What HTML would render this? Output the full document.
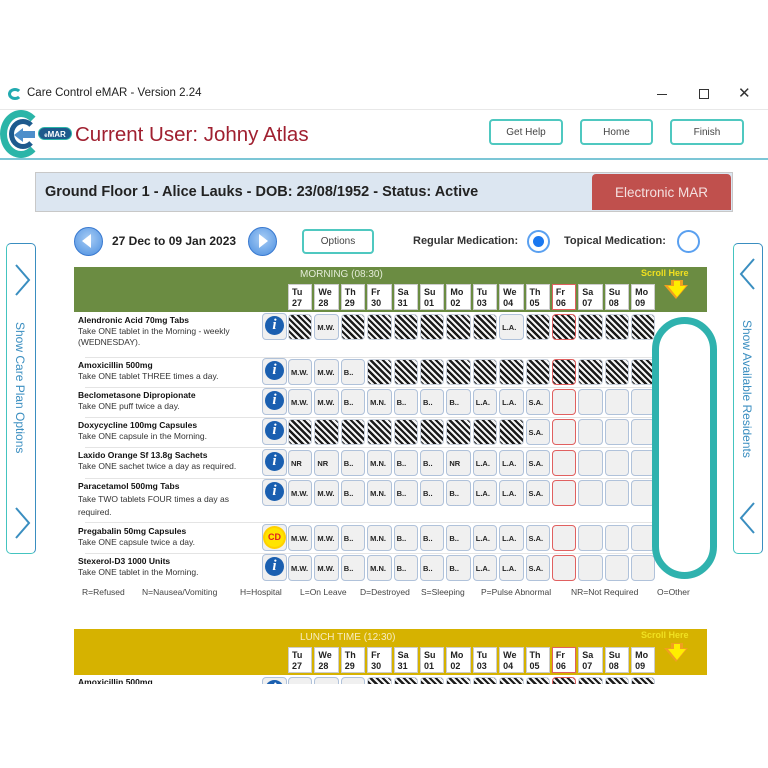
<!DOCTYPE html>
<html><head><meta charset="utf-8"><style>
*{box-sizing:border-box;margin:0;padding:0}
body{width:768px;height:768px;background:#fff;position:relative;overflow:hidden;font-family:"Liberation Sans",sans-serif;color:#222}
.a{position:absolute}
.btn{position:absolute;border:2px solid #4fc8c0;border-radius:4px;background:#fff;font-size:10px;color:#444;display:flex;align-items:center;justify-content:center}
.side{position:absolute;width:30px;border:1.5px solid #3a8ec0;border-radius:5px;border-color:#3a8ec0 #3a8ec0 #44c4c0 #44c4c0}
.vt{position:absolute;writing-mode:vertical-rl;font-size:12px;color:#3a8ec0;left:6px}
.grid{position:absolute;left:288px;display:grid;grid-template-columns:repeat(14,24.4px);column-gap:2px}
.c{height:26px;border:1.5px solid #b0c2da;border-radius:4px;background:#f0f0f0;font-size:7.5px;font-weight:bold;display:flex;align-items:center;padding-left:2px;white-space:nowrap;overflow:hidden}
.h{background:repeating-linear-gradient(45deg,#1a1a1a 0 2.2px,#f4f4f4 2.2px 4.4px);border-color:#c8d0dc}
.r{border-color:#e06060}
.dh{height:26px;background:#fff;font-size:9px;font-weight:bold;line-height:11px;padding:2px 0 0 3px;border:1px solid #ccc}
.dh.r{border-color:#e06060}
.med{position:absolute;left:78px;font-size:8.5px;color:#333;line-height:11px}
.med b{font-size:8.5px;color:#111}
.info{position:absolute;left:262px;width:25px;height:27px;border:1.5px solid #b0c2da;border-radius:4px;background:#f0f0f0}
.info:after{content:"i";position:absolute;left:2px;top:2px;width:19px;height:19px;border-radius:50%;background:#1a5fb0;color:#fff;font:italic bold 15px "Liberation Serif",serif;text-align:center;line-height:19px}
.sep{position:absolute;left:85px;width:570px;height:1px;background:#e4e4e4}
.lg{position:absolute;top:587px;font-size:8.5px;color:#444;white-space:nowrap}
svg.ch{position:absolute}
</style></head><body>
<!-- title bar -->
<div class="a" style="left:8px;top:88px;width:14px;height:12px;border:3px solid #22aab0;border-right-color:transparent;border-radius:50%"></div>
<div class="a" style="left:27px;top:87px;font-size:11.5px;color:#222">Care Control eMAR - Version 2.24</div>
<div class="a" style="left:657px;top:94px;width:10px;height:1px;background:#333"></div>
<div class="a" style="left:699px;top:89px;width:10px;height:10px;border:1px solid #333"></div>
<div class="a" style="left:738px;top:84px;font-size:15px;color:#333">✕</div>
<div class="a" style="left:0;top:109px;width:768px;height:1px;background:#e8e8e8"></div>
<!-- logo -->
<div class="a" style="left:0;top:110px;width:42px;height:48px;border:7px solid #2bb5a8;border-right-color:transparent;border-radius:50%"></div>
<div class="a" style="left:9px;top:119px;width:28px;height:30px;border:5px solid #1d5a8e;border-right-color:transparent;border-radius:50%"></div>
<div class="a" style="left:14px;top:128px;width:0;height:0;border:7px solid transparent;border-right:9px solid #4d8fcb;border-left:0"></div>
<div class="a" style="left:23px;top:131px;width:12px;height:7px;background:#4d8fcb"></div>
<div class="a" style="left:38px;top:127px;width:34px;height:13px;border-radius:7px;background:#1e5a8c;color:#fff;font-size:8px;font-weight:bold;line-height:13px;text-align:center;border:1.5px solid #2bb5a8"><span style="font-size:6px">e</span>MAR</div>
<div class="a" style="left:75px;top:123px;font-size:20.5px;color:#a02030">Current User: Johny Atlas</div>
<div class="btn" style="left:489px;top:119px;width:74px;height:26px">Get Help</div>
<div class="btn" style="left:580px;top:119px;width:73px;height:26px">Home</div>
<div class="btn" style="left:670px;top:119px;width:74px;height:26px">Finish</div>
<div class="a" style="left:0;top:158px;width:768px;height:2px;background:#7cc6d6"></div>
<!-- patient bar -->
<div class="a" style="left:35px;top:172px;width:698px;height:40px;background:#dce6f1;border:1px solid #c8c8c8"></div>
<div class="a" style="left:45px;top:184px;font-size:14.5px;font-weight:bold;color:#222">Ground Floor 1 - Alice Lauks - DOB: 23/08/1952 - Status: Active</div>
<div class="a" style="left:592px;top:174px;width:139px;height:36px;background:#c0504d;border-radius:4px 4px 0 0;color:#f4e0e0;font-size:13.5px;text-align:center;line-height:38px">Electronic MAR</div>
<!-- nav -->
<div class="a" style="left:74px;top:227px;width:29px;height:29px;border-radius:50%;background:radial-gradient(circle at 50% 40%,#a8cdf5,#4a8ee0);border:1px solid #3a7ad0"></div>
<div class="a" style="left:82px;top:234px;border:7px solid transparent;border-right:9px solid #fff;border-left:0"></div>
<div class="a" style="left:112px;top:234px;font-size:12px;font-weight:bold">27 Dec to 09 Jan 2023</div>
<div class="a" style="left:248px;top:227px;width:29px;height:29px;border-radius:50%;background:radial-gradient(circle at 50% 40%,#a8cdf5,#4a8ee0);border:1px solid #3a7ad0"></div>
<div class="a" style="left:259px;top:234px;border:7px solid transparent;border-left:9px solid #fff;border-right:0"></div>
<div class="btn" style="left:302px;top:229px;width:72px;height:25px">Options</div>
<div class="a" style="left:413px;top:235px;font-size:11px;font-weight:bold;color:#333">Regular Medication:</div>
<div class="a" style="left:527px;top:230px;width:23px;height:23px;border-radius:50%;border:2px solid #5aa0f0"></div>
<div class="a" style="left:533px;top:236px;width:11px;height:11px;border-radius:50%;background:#1a78f0"></div>
<div class="a" style="left:564px;top:235px;font-size:11px;font-weight:bold;color:#333">Topical Medication:</div>
<div class="a" style="left:677px;top:230px;width:23px;height:23px;border-radius:50%;border:2px solid #5aa0f0"></div>
<!-- side panels -->
<div class="side" style="left:6px;top:243px;height:311px"></div>
<svg class="ch" style="left:12px;top:262px" width="20" height="36"><path d="M4 3 L17 18 L4 33" fill="none" stroke="#3a8ec0" stroke-width="2"/></svg>
<svg class="ch" style="left:12px;top:505px" width="20" height="36"><path d="M4 3 L17 18 L4 33" fill="none" stroke="#3a8ec0" stroke-width="2"/></svg>
<div class="vt" style="left:13px;top:322px">Show Care Plan Options</div>
<div class="side" style="left:733px;top:243px;height:311px"></div>
<svg class="ch" style="left:738px;top:256px" width="20" height="36"><path d="M16 3 L3 18 L16 33" fill="none" stroke="#3a8ec0" stroke-width="2"/></svg>
<svg class="ch" style="left:738px;top:500px" width="20" height="36"><path d="M16 3 L3 18 L16 33" fill="none" stroke="#3a8ec0" stroke-width="2"/></svg>
<div class="vt" style="left:740px;top:320px">Show Available Residents</div>
<!-- morning header -->
<div class="a" style="left:74px;top:267px;width:633px;height:45px;background:#6b8c42"></div>
<div class="a" style="left:300px;top:269px;font-size:10px;color:#e4ecd8">MORNING (08:30)</div>
<div class="a" style="left:641px;top:268px;font-size:9px;font-weight:bold;color:#f0e020">Scroll Here</div>
<div class="a" style="left:664px;top:285px;border:12px solid transparent;border-top:14px solid #f0a020;border-bottom:0"></div>
<div class="a" style="left:671px;top:280px;width:12px;height:6px;background:#f0a020"></div>
<div class="a" style="left:668px;top:286px;border:9px solid transparent;border-top:11px solid #ffee00;border-bottom:0"></div>
<div class="a" style="left:674px;top:281px;width:6px;height:6px;background:#ffee00"></div>
<div class="grid" style="top:284px">
<div class="dh">Tu<br>27</div><div class="dh">We<br>28</div><div class="dh">Th<br>29</div><div class="dh">Fr<br>30</div><div class="dh">Sa<br>31</div><div class="dh">Su<br>01</div><div class="dh">Mo<br>02</div><div class="dh">Tu<br>03</div><div class="dh">We<br>04</div><div class="dh">Th<br>05</div><div class="dh r">Fr<br>06</div><div class="dh">Sa<br>07</div><div class="dh">Su<br>08</div><div class="dh">Mo<br>09</div>
</div>
<!-- rows -->
<div class="med" style="top:315px"><b>Alendronic Acid 70mg Tabs</b><br>Take ONE tablet in the Morning - weekly<br>(WEDNESDAY).</div>
<div class="info" style="top:313px"></div>
<div class="grid" style="top:314px"><div class="c h"></div><div class="c">M.W.</div><div class="c h"></div><div class="c h"></div><div class="c h"></div><div class="c h"></div><div class="c h"></div><div class="c h"></div><div class="c">L.A.</div><div class="c h"></div><div class="c h r"></div><div class="c h"></div><div class="c h"></div><div class="c h"></div></div>
<div class="sep" style="top:357px"></div>
<div class="med" style="top:360px"><b>Amoxicillin 500mg</b><br>Take ONE tablet THREE times a day.</div>
<div class="info" style="top:358px"></div>
<div class="grid" style="top:359px"><div class="c">M.W.</div><div class="c">M.W.</div><div class="c">B..</div><div class="c h"></div><div class="c h"></div><div class="c h"></div><div class="c h"></div><div class="c h"></div><div class="c h"></div><div class="c h"></div><div class="c h r"></div><div class="c h"></div><div class="c h"></div><div class="c h"></div></div>
<div class="sep" style="top:387px"></div>
<div class="med" style="top:390px"><b>Beclometasone Dipropionate</b><br>Take ONE puff twice a day.</div>
<div class="info" style="top:388px"></div>
<div class="grid" style="top:389px"><div class="c">M.W.</div><div class="c">M.W.</div><div class="c">B..</div><div class="c">M.N.</div><div class="c">B..</div><div class="c">B..</div><div class="c">B..</div><div class="c">L.A.</div><div class="c">L.A.</div><div class="c">S.A.</div><div class="c r"></div><div class="c"></div><div class="c"></div><div class="c"></div></div>
<div class="sep" style="top:417px"></div>
<div class="med" style="top:420px"><b>Doxycycline 100mg Capsules</b><br>Take ONE capsule in the Morning.</div>
<div class="info" style="top:418px"></div>
<div class="grid" style="top:419px"><div class="c h"></div><div class="c h"></div><div class="c h"></div><div class="c h"></div><div class="c h"></div><div class="c h"></div><div class="c h"></div><div class="c h"></div><div class="c h"></div><div class="c">S.A.</div><div class="c r"></div><div class="c"></div><div class="c"></div><div class="c"></div></div>
<div class="sep" style="top:447px"></div>
<div class="med" style="top:450px"><b>Laxido Orange Sf 13.8g Sachets</b><br>Take ONE sachet twice a day as required.</div>
<div class="info" style="top:449px"></div>
<div class="grid" style="top:450px"><div class="c">NR</div><div class="c">NR</div><div class="c">B..</div><div class="c">M.N.</div><div class="c">B..</div><div class="c">B..</div><div class="c">NR</div><div class="c">L.A.</div><div class="c">L.A.</div><div class="c">S.A.</div><div class="c r"></div><div class="c"></div><div class="c"></div><div class="c"></div></div>
<div class="sep" style="top:478px"></div>
<div class="med" style="top:481px"><b>Paracetamol 500mg Tabs</b><br><span style="line-height:15px">Take TWO tablets FOUR times a day as</span><br>required.</div>
<div class="info" style="top:479px"></div>
<div class="grid" style="top:480px"><div class="c">M.W.</div><div class="c">M.W.</div><div class="c">B..</div><div class="c">M.N.</div><div class="c">B..</div><div class="c">B..</div><div class="c">B..</div><div class="c">L.A.</div><div class="c">L.A.</div><div class="c">S.A.</div><div class="c r"></div><div class="c"></div><div class="c"></div><div class="c"></div></div>
<div class="sep" style="top:522px"></div>
<div class="med" style="top:526px"><b>Pregabalin 50mg Capsules</b><br>Take ONE capsule twice a day.</div>
<div class="info" style="top:524px;background:#f0f0f0"></div>
<div class="a" style="left:265px;top:528px;width:19px;height:19px;background:#ffe400;border-radius:50%;box-shadow:0 0 0 2px #ffd000;color:#e02020;font-size:9px;font-weight:bold;text-align:center;line-height:19px">CD</div>
<div class="grid" style="top:525px"><div class="c">M.W.</div><div class="c">M.W.</div><div class="c">B..</div><div class="c">M.N.</div><div class="c">B..</div><div class="c">B..</div><div class="c">B..</div><div class="c">L.A.</div><div class="c">L.A.</div><div class="c">S.A.</div><div class="c r"></div><div class="c"></div><div class="c"></div><div class="c"></div></div>
<div class="sep" style="top:553px"></div>
<div class="med" style="top:556px"><b>Stexerol-D3 1000 Units</b><br>Take ONE tablet in the Morning.</div>
<div class="info" style="top:554px"></div>
<div class="grid" style="top:555px"><div class="c">M.W.</div><div class="c">M.W.</div><div class="c">B..</div><div class="c">M.N.</div><div class="c">B..</div><div class="c">B..</div><div class="c">B..</div><div class="c">L.A.</div><div class="c">L.A.</div><div class="c">S.A.</div><div class="c r"></div><div class="c"></div><div class="c"></div><div class="c"></div></div>
<div class="lg" style="left:82px">R=Refused</div>
<div class="lg" style="left:142px">N=Nausea/Vomiting</div>
<div class="lg" style="left:240px">H=Hospital</div>
<div class="lg" style="left:300px">L=On Leave</div>
<div class="lg" style="left:360px">D=Destroyed</div>
<div class="lg" style="left:421px">S=Sleeping</div>
<div class="lg" style="left:481px">P=Pulse Abnormal</div>
<div class="lg" style="left:571px">NR=Not Required</div>
<div class="lg" style="left:657px">O=Other</div>
<!-- teal highlight -->
<div class="a" style="left:652px;top:317px;width:65px;height:262px;border:7px solid #2fb2ae;border-radius:33px"></div>
<!-- lunch -->
<div class="a" style="left:74px;top:629px;width:633px;height:46px;background:#d6b200"></div>
<div class="a" style="left:300px;top:632px;font-size:10px;color:#f8ecc0">LUNCH TIME (12:30)</div>
<div class="a" style="left:641px;top:630px;font-size:9px;font-weight:bold;color:#f0e020">Scroll Here</div>
<div class="a" style="left:664px;top:648px;border:12px solid transparent;border-top:14px solid #f0a020;border-bottom:0"></div>
<div class="a" style="left:671px;top:643px;width:12px;height:6px;background:#f0a020"></div>
<div class="a" style="left:668px;top:649px;border:9px solid transparent;border-top:11px solid #ffee00;border-bottom:0"></div>
<div class="a" style="left:674px;top:644px;width:6px;height:6px;background:#ffee00"></div>
<div class="grid" style="top:647px">
<div class="dh">Tu<br>27</div><div class="dh">We<br>28</div><div class="dh">Th<br>29</div><div class="dh">Fr<br>30</div><div class="dh">Sa<br>31</div><div class="dh">Su<br>01</div><div class="dh">Mo<br>02</div><div class="dh">Tu<br>03</div><div class="dh">We<br>04</div><div class="dh">Th<br>05</div><div class="dh r">Fr<br>06</div><div class="dh">Sa<br>07</div><div class="dh">Su<br>08</div><div class="dh">Mo<br>09</div>
</div>
<div class="a" style="left:0;top:676px;width:768px;height:8px;overflow:hidden">
<div class="med" style="top:1px"><b>Amoxicillin 500mg</b></div>
<div class="info" style="top:1px"></div>
<div class="grid" style="top:1px"><div class="c"></div><div class="c"></div><div class="c"></div><div class="c h"></div><div class="c h"></div><div class="c h"></div><div class="c h"></div><div class="c h"></div><div class="c h"></div><div class="c h"></div><div class="c h r"></div><div class="c h"></div><div class="c h"></div><div class="c h"></div></div>
</div>
</body></html>
